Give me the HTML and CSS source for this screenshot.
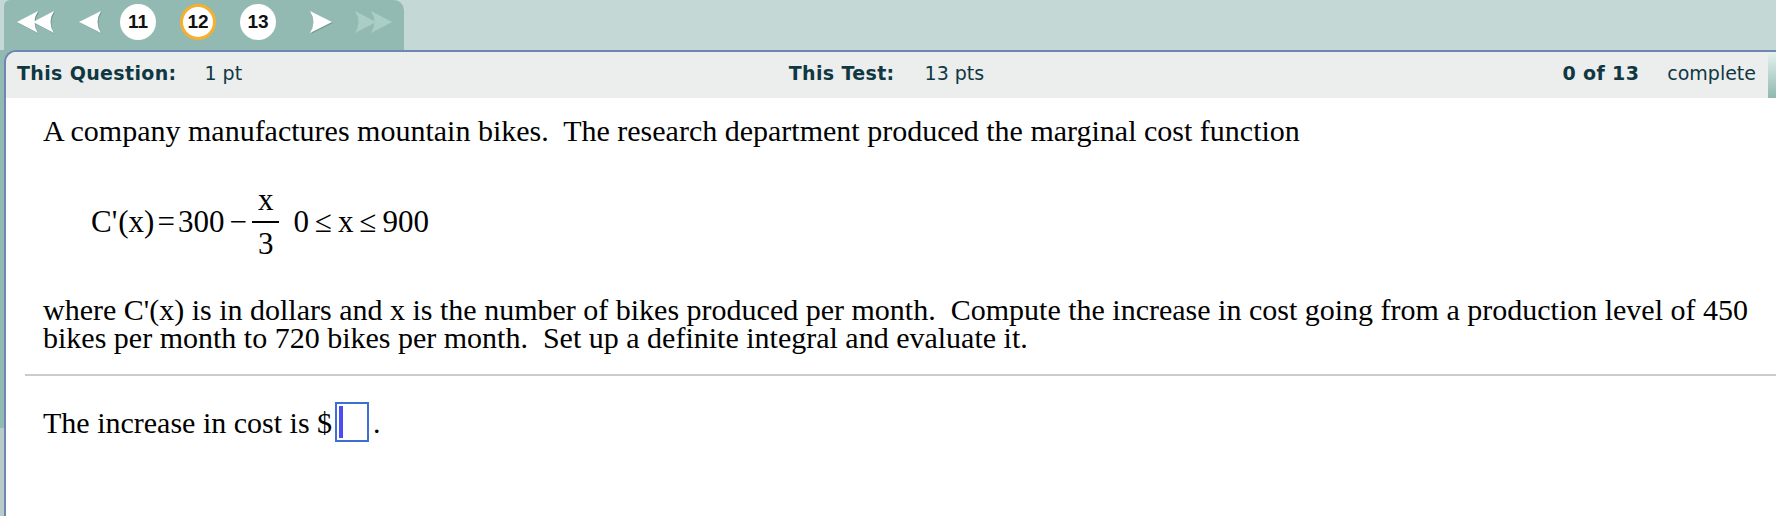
FILE: index.html
```html
<!DOCTYPE html>
<html lang="en">
<head>
<meta charset="utf-8">
<title>Question 12</title>
<link rel="stylesheet" href="styles.css">
</head>
<body>
<div class="topbar">
  <nav class="qnav">
    <span class="arrow first">
      <svg width="42" height="24" viewBox="0 0 42 24"><path d="M0 12 L21 1 Q14 12 21 23 Z"/><path d="M16 12 L37 1 Q30 12 37 23 Z"/></svg>
    </span>
    <span class="arrow prev">
      <svg width="23" height="24" viewBox="0 0 23 24"><path d="M0 12 L22 1 Q15 12 22 23 Z"/></svg>
    </span>
    <span class="qnum">11</span>
    <span class="qnum current">12</span>
    <span class="qnum">13</span>
    <span class="arrow next">
      <svg width="23" height="24" viewBox="0 0 23 24"><path d="M23 12 L1 1 Q8 12 1 23 Z"/></svg>
    </span>
    <span class="arrow last">
      <svg width="42" height="24" viewBox="0 0 42 24"><path d="M26 12 L5 1 Q12 12 5 23 Z"/><path d="M42 12 L21 1 Q28 12 21 23 Z"/></svg>
    </span>
  </nav>
</div>
<div class="main">
  <div class="panel">
    <div class="header">
      <div class="hbar">
        <div class="hcell hleft"><b>This Question:</b><span>1 pt</span></div>
        <div class="hcell hcenter"><b>This Test:</b><span>13 pts</span></div>
        <div class="hcell hright"><b>0 of 13</b><span>complete</span></div>
      </div>
      <div class="hedge"></div>
    </div>
    <div class="question">
      <p class="line1">A company manufactures mountain bikes.&nbsp; The research department produced the marginal cost function</p>
      <div class="formula"><span class="f-lhs">C<span class="prime">'</span>(x)</span><span class="f-op">=</span><span>300</span><span class="f-minus">&minus;</span><span class="frac"><span class="num">x</span><span class="den">3</span></span><span class="f-range">0<span class="f-rel">&le;</span>x<span class="f-rel">&le;</span>900</span></div>
      <p class="para">where C'(x) is in dollars and x is the number of bikes produced per month.&nbsp; Compute the increase in cost going from a production level of 450 bikes per month to 720 bikes per month.&nbsp; Set up a definite integral and evaluate it.</p>
    </div>
    <div class="sep"></div>
    <div class="answer">The increase in cost is $<span class="input"><span class="caret"></span></span>.</div>
  </div>
</div>
</body>
</html>
```
FILE: styles.css
```css
html, body {
  margin: 0;
  padding: 0;
}
body {
  background: #c4d9d6;
  width: 1776px;
  height: 516px;
  overflow: hidden;
}
.topbar {
  height: 50px;
  display: flex;
}
.qnav {
  margin-left: 4px;
  width: 400px;
  height: 50px;
  box-sizing: border-box;
  background: #93bab2;
  border-radius: 6px 10px 0 0;
  display: flex;
  align-items: center;
  padding: 0 0 6px 13px;
}
.arrow {
  display: flex;
  fill: #ffffff;
  filter: drop-shadow(1px 1px 0 rgba(60, 100, 95, 0.35));
}
.arrow.prev { margin-left: 20px; }
.arrow.next { margin-left: 33px; }
.arrow.last { margin-left: 18px; fill: #aacdc5; filter: none; }
.qnum {
  width: 36px;
  height: 36px;
  box-sizing: border-box;
  border-radius: 50%;
  background: #ffffff;
  display: flex;
  align-items: center;
  justify-content: center;
  font-family: "Liberation Sans", Arial, sans-serif;
  font-weight: bold;
  font-size: 19px;
  color: #111111;
  margin-left: 18px;
}
.qnum.current {
  border: 3px solid #f5b02e;
  margin-left: 24px;
}
.qnum.current + .qnum { margin-left: 24px; }

.main {
  padding-left: 4px;
  background: linear-gradient(#93bab2 0, #93bab2 378px, #b7cbc7 378px);
}
.panel {
  background: #ffffff;
  border-top: 2px solid #6f86b1;
  border-left: 2px solid #6f86b1;
  border-top-left-radius: 12px;
  height: 470px;
}
.header {
  display: flex;
  height: 46px;
}
.hbar {
  flex: 1;
  background: #eceeed;
  border-top-left-radius: 10px;
  display: grid;
  grid-template-columns: 1fr auto 1fr;
  align-items: center;
  padding: 0 12px 4px 11px;
  font-family: "DejaVu Sans", Verdana, sans-serif;
  font-size: 19px;
  color: #0f3843;
}
.hcell {
  display: flex;
  gap: 28px;
  white-space: nowrap;
}
.hcell b {
  font-weight: bold;
  letter-spacing: 0.35px;
}
.hcenter { gap: 30px; }
.hright { justify-content: flex-end; }
.hedge {
  width: 8px;
  background: linear-gradient(#e4f3ef, #8fb8ae);
}

.question {
  padding-left: 37px;
  font-family: "Liberation Serif", "Times New Roman", serif;
  font-size: 30px;
  line-height: 28px;
  color: #000000;
}
.question p { margin: 0; }
.line1 { padding-top: 19px; }
.formula {
  margin: 43px 0 0 48px;
  display: flex;
  align-items: center;
  white-space: nowrap;
  font-size: 31px;
}
.prime { margin: 0 1px 0 0; }
.f-op { margin: 0 3px 0 3px; }
.f-minus { margin: 0 5px 0 5px; }
.frac {
  display: flex;
  flex-direction: column;
  align-items: center;
}
.num {
  line-height: 24px;
  padding: 0 6px 9px;
  border-bottom: 2px solid #000;
}
.den {
  line-height: 24px;
  padding-top: 9px;
}
.f-range { margin-left: 14px; }
.f-rel { margin: 0 6px; }
.para {
  margin-top: 40px !important;
  width: 1720px;
}
.sep {
  margin: 22px 0 0 19px;
  height: 2px;
  background: #cccccc;
}
.answer {
  margin-top: 26px;
  padding-left: 37px;
  font-family: "Liberation Serif", "Times New Roman", serif;
  font-size: 30px;
  line-height: 28px;
  color: #000000;
}
.input {
  display: inline-block;
  width: 34px;
  height: 40px;
  box-sizing: border-box;
  border: 2px solid #3d6fd3;
  vertical-align: -9px;
  margin: 0 4px 0 3px;
}
.caret {
  display: block;
  width: 4px;
  height: 32px;
  margin: 2px 0 0 2px;
  background: #4b4cf2;
}
```
